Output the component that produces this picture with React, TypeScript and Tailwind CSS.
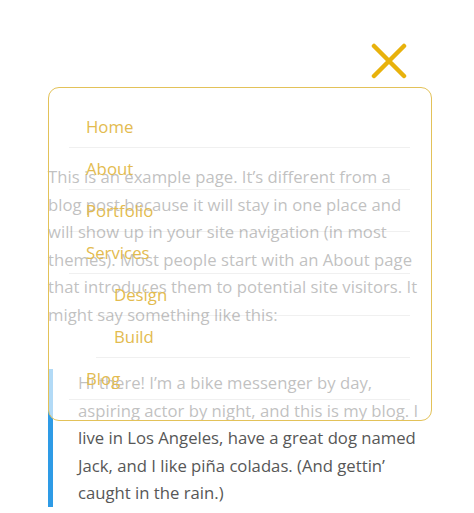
import React from "react";

const items: { label: string; nested?: boolean }[] = [
  { label: "Home" },
  { label: "About" },
  { label: "Portfolio" },
  { label: "Services" },
  { label: "Design", nested: true },
  { label: "Build", nested: true },
  { label: "Blog" },
];

export default function App() {
  return (
    <div className="relative w-[474px] h-[513px] overflow-hidden bg-white font-['Open_Sans','Noto_Sans',sans-serif]">
      <div className="pt-[163px] pl-[48px] w-[426px]">
        <p className="text-[16.7px] leading-[27.5px] text-[#575757]">
          This is an example page. It’s different from a blog post because it will stay in one place and will show up in your site navigation (in most themes). Most people start with an About page that introduces them to potential site visitors. It might say something like this:
        </p>
        <blockquote className="mt-[41px] border-l-[5px] border-[#2e9be6] pl-[25px] text-[16.7px] leading-[27.5px] text-[#575757]">
          Hi there! I’m a bike messenger by day, aspiring actor by night, and this is my blog. I live in Los Angeles, have a great dog named Jack, and I like piña coladas. (And gettin’ caught in the rain.)
        </blockquote>
      </div>

      <button className="absolute left-[371px] top-[43px] w-[36px] h-[36px] flex items-center justify-center" aria-label="Close menu">
        <svg width="36" height="36" viewBox="0 0 36 36" fill="none">
          <path d="M3 3 L33 33 M33 3 L3 33" stroke="#e8b20c" strokeWidth="4.5" strokeLinecap="round" />
        </svg>
      </button>

      <nav className="absolute left-[48px] top-[87px] w-[384px] h-[334px] rounded-[11px] border-[1.5px] border-[#e3c259] bg-white/[0.63] pt-[18px] pl-[20px] pr-[21px]">
        <ul>
          {items.map((it) => (
            <li
              key={it.label}
              className={
                it.nested
                  ? "ml-[27px] h-[42px] border-b border-black/[0.06] pl-[18px] flex items-center text-[16.8px] text-[#e3bb4f]"
                  : "h-[42px] border-b border-black/[0.06] pl-[17px] flex items-center text-[16.8px] text-[#e3bb4f]"
              }
            >
              {it.label}
            </li>
          ))}
        </ul>
      </nav>
    </div>
  );
}
